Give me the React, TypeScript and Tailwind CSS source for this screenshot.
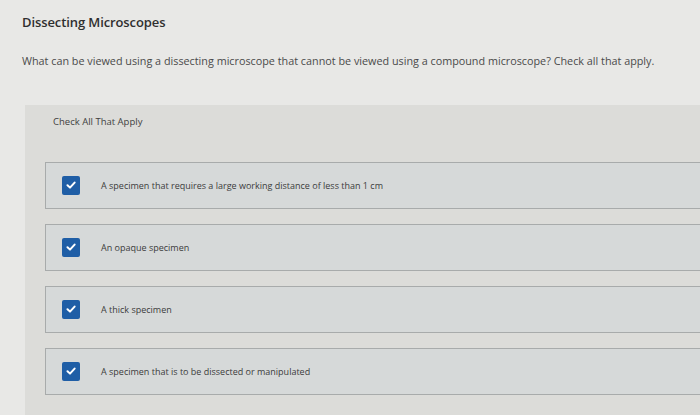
import React from 'react';

const options = [
  'A specimen that requires a large working distance of less than 1 cm',
  'An opaque specimen',
  'A thick specimen',
  'A specimen that is to be dissected or manipulated',
];

function CheckBox() {
  return (
    <div className="w-[18px] h-[19px] rounded-[2px] bg-[#1f5ea6] flex items-center justify-center shrink-0">
      <svg width="10" height="10" viewBox="0 0 10 10">
        <path d="M1.5 5.2 L4 7.6 L8.6 2.6" fill="none" stroke="#ffffff" strokeWidth="2" strokeLinecap="round" strokeLinejoin="round" />
      </svg>
    </div>
  );
}

export default function App() {
  return (
    <div
      className="w-[700px] h-[415px] overflow-hidden bg-[#e8e8e6] flex flex-col"
      style={{ fontFamily: '"Open Sans", "Liberation Sans", sans-serif' }}
    >
      <div className="pl-[22px] pt-[13px]">
        <h1 className="text-[13px] font-semibold text-[#2f2f2f] tracking-[-0.1px]">Dissecting Microscopes</h1>
        <p className="mt-[20px] text-[10.8px] text-[#4a4a4a]">
          What can be viewed using a dissecting microscope that cannot be viewed using a compound microscope? Check all that apply.
        </p>
      </div>

      <div className="ml-[25px] mt-[36px] flex-1 bg-[#dcdcd9] pt-[10px] pl-[20px]">
        <p className="text-[9.5px] text-[#3f3f3f] pl-[8px]">Check All That Apply</p>
        <div className="mt-[33px] flex flex-col gap-[15px]">
          {options.map((opt) => (
            <div
              key={opt}
              className="h-[47px] border border-[#a8abab] border-r-0 bg-[#d6d9d9] flex items-center pl-[16px] gap-[21px]"
            >
              <CheckBox />
              <span className="text-[9px] text-[#3c3c3c]">{opt}</span>
            </div>
          ))}
        </div>
      </div>
    </div>
  );
}
